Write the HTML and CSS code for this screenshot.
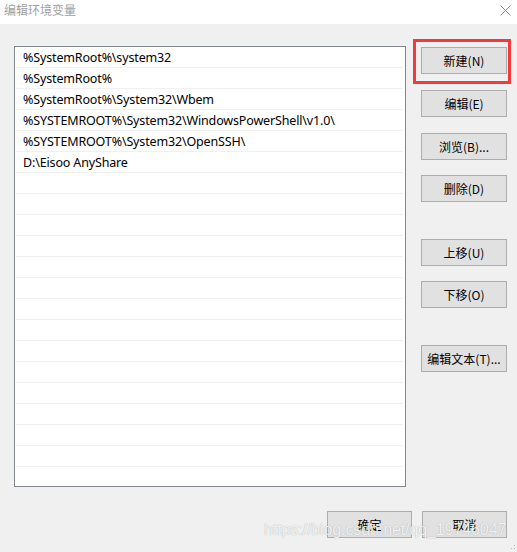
FILE: index.html
```html
<!DOCTYPE html>
<html>
<head>
<meta charset="utf-8">
<link rel="stylesheet" href="styles.css">
</head>
<body>
<div class="window">
  <div class="titlebar">
    <span class="title">编辑环境变量</span>
    <svg class="close" width="11" height="11" viewBox="0 0 11 11"><path d="M0.5 0.5 L10.5 10.5 M10.5 0.5 L0.5 10.5" stroke="#8a8a8a" stroke-width="1" fill="none"/></svg>
  </div>
  <div class="content">
    <div class="main">
      <div class="list">
        <div class="row">%SystemRoot%\system32</div>
        <div class="row">%SystemRoot%</div>
        <div class="row">%SystemRoot%\System32\Wbem</div>
        <div class="row">%SYSTEMROOT%\System32\WindowsPowerShell\v1.0\</div>
        <div class="row">%SYSTEMROOT%\System32\OpenSSH\</div>
        <div class="row">D:\Eisoo AnyShare</div>
        <div class="row"></div>
        <div class="row"></div>
        <div class="row"></div>
        <div class="row"></div>
        <div class="row"></div>
        <div class="row"></div>
        <div class="row"></div>
        <div class="row"></div>
        <div class="row"></div>
        <div class="row"></div>
        <div class="row"></div>
        <div class="row"></div>
        <div class="row"></div>
        <div class="row"></div>
        <div class="row last"></div>
      </div>
      <div class="side">
        <div class="btn-wrap">
          <button class="btn">新建(N)</button>
          <div class="highlight"></div>
        </div>
        <button class="btn g16">编辑(E)</button>
        <button class="btn g16">浏览(B)...</button>
        <button class="btn g15">删除(D)</button>
        <button class="btn g37">上移(U)</button>
        <button class="btn g15">下移(O)</button>
        <button class="btn g37">编辑文本(T)...</button>
      </div>
    </div>
    <div class="footer">
      <button class="btn">确定</button>
      <button class="btn">取消</button>
      <span class="watermark">https://blog.csdn.net/qq_19746047</span>
    </div>
    <svg class="grip" width="5" height="5" viewBox="0 0 5 5">
      <rect x="3" y="0" width="1" height="1" fill="#b8b8b8"/>
      <rect x="0" y="3" width="1" height="1" fill="#b8b8b8"/>
      <rect x="3" y="3" width="1" height="1" fill="#b8b8b8"/>
    </svg>
  </div>
</div>
</body>
</html>
```
FILE: styles.css
```css
html, body {
  margin: 0;
  padding: 0;
}
body {
  width: 517px;
  height: 552px;
  overflow: hidden;
  background: #f0f0f0;
  font-family: "Noto Sans", "Noto Sans CJK SC", sans-serif;
  font-size: 12px;
  color: #000;
}
.window {
  width: 517px;
  height: 552px;
  display: flex;
  flex-direction: column;
}
.titlebar {
  height: 24px;
  background: #fff;
  display: flex;
  align-items: center;
  justify-content: space-between;
  padding: 0 6px 0 4px;
  box-sizing: border-box;
}
.title {
  color: #a0a0a0;
  font-family: "Noto Sans CJK SC", sans-serif;
  font-size: 12px;
  margin-top: -6px;
}
.close {
  margin-top: -4px;
}
.content {
  position: relative;
  flex: 1;
}
.main {
  display: flex;
  padding: 22px 0 0 14px;
}
.list {
  width: 392px;
  height: 441px;
  box-sizing: border-box;
  border: 1px solid #82878f;
  background: #fff;
  overflow: hidden;
}
.row {
  height: 21px;
  box-sizing: border-box;
  border-bottom: 1px solid #f0f0f0;
  margin: 0 2px 0 1px;
  padding: 1px 0 0 7px;
  line-height: 20px;
  font-size: 12.5px;
  letter-spacing: -0.15px;
  white-space: nowrap;
}
.row.last {
  border-bottom: none;
}
.side {
  display: flex;
  flex-direction: column;
  margin-left: 15px;
  padding-top: 1px;
}
.btn {
  width: 86px;
  height: 27px;
  box-sizing: border-box;
  border: 1px solid #adadad;
  background: #e1e1e1;
  font-family: "Noto Sans CJK SC", "Noto Sans", sans-serif;
  font-size: 12px;
  color: #000;
  padding: 0;
  line-height: 25px;
  text-align: center;
}
.btn-wrap {
  position: relative;
  height: 27px;
}
.highlight {
  position: absolute;
  left: -8px;
  top: -8px;
  width: 98px;
  height: 45px;
  box-sizing: border-box;
  border: 3px solid #f23c3c;
}
.g16 { margin-top: 16px; }
.g15 { margin-top: 15px; }
.g37 { margin-top: 37px; }
.footer {
  position: relative;
  display: flex;
  justify-content: flex-end;
  gap: 10px;
  padding: 24px 10px 0 0;
}
.footer .btn {
  width: 85px;
}
.watermark {
  position: absolute;
  left: 264px;
  top: 34px;
  font-family: "Liberation Sans", sans-serif;
  font-size: 16px;
  letter-spacing: -0.1px;
  color: rgba(255, 255, 255, 0.85);
  text-shadow: 0 0 1px rgba(110, 110, 110, 0.6);
  white-space: nowrap;
  pointer-events: none;
}
.grip {
  position: absolute;
  right: 1px;
  bottom: 2px;
}
```
